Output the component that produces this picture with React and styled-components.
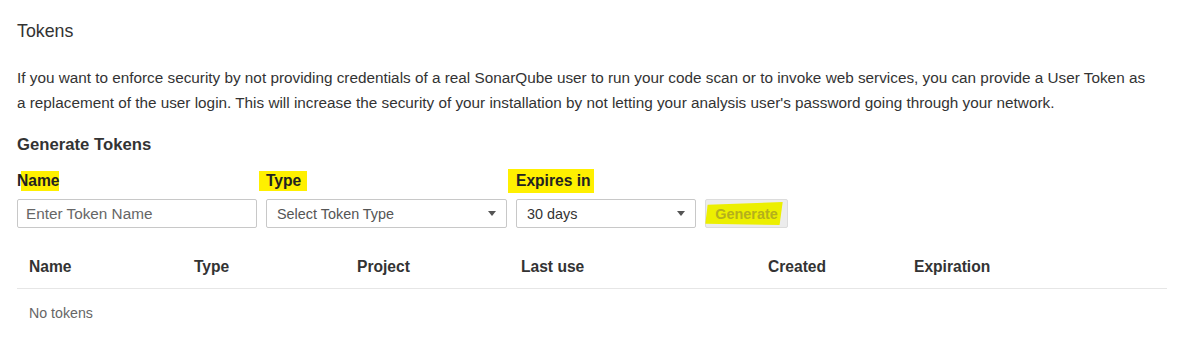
import styled, { createGlobalStyle } from 'styled-components';

const GlobalStyle = createGlobalStyle`
  body {
    margin: 0;
    background: #fff;
    font-family: 'Liberation Sans', Arial, sans-serif;
    color: #333;
  }
`;

const columns = [
  { label: 'Name', width: 165 },
  { label: 'Type', width: 163 },
  { label: 'Project', width: 164 },
  { label: 'Last use', width: 247 },
  { label: 'Created', width: 146 },
  { label: 'Expiration', width: null },
];

const Arrow = () => (
  <svg width='8' height='5' viewBox='0 0 8 5'>
    <path d='M0 0 L8 0 L4 5 Z' fill='#555' />
  </svg>
);

const App = () => (
  <>
    <GlobalStyle />
    <Page>
      <Title>Tokens</Title>
      <Description>
        If you want to enforce security by not providing credentials of a real
        SonarQube user to run your code scan or to invoke web services, you can
        provide a User Token as a replacement of the user login. This will
        increase the security of your installation by not letting your analysis
        user's password going through your network.
      </Description>

      <SubTitle>Generate Tokens</SubTitle>
      <Form>
        <Field width={240}>
          <Label>
            <Mark kind='name'>Name</Mark>
          </Label>
          <Input placeholder='Enter Token Name' />
        </Field>
        <Field width={241}>
          <Label>
            <Mark kind='type'>Type</Mark>
          </Label>
          <Select>
            <SelectText muted>Select Token Type</SelectText>
            <Arrow />
          </Select>
        </Field>
        <Field width={180}>
          <Label>
            <Mark kind='expires'>Expires in</Mark>
          </Label>
          <Select>
            <SelectText>30 days</SelectText>
            <Arrow />
          </Select>
        </Field>
        <GenerateButton disabled>
          <ButtonMark>Generate</ButtonMark>
        </GenerateButton>
      </Form>

      <Table>
        <HeadRow>
          {columns.map((c) => (
            <HeadCell key={c.label} width={c.width}>
              {c.label}
            </HeadCell>
          ))}
        </HeadRow>
        <EmptyRow>No tokens</EmptyRow>
      </Table>
    </Page>
  </>
);

const markPadding = {
  name: '1px 0 1px 0',
  type: '1px 6px 1px 7px',
  expires: '3px 3px 3px 8px',
};

const markShift = {
  name: '0',
  type: '-7px',
  expires: '-8px',
};

const Page = styled.div`
  padding: 20px 13px 0 17px;
  width: 1150px;
`;

const Title = styled.h2`
  margin: 0;
  font-size: 17.8px;
  font-weight: 400;
  line-height: 22px;
  color: #333;
`;

const Description = styled.p`
  margin: 23px 0 0;
  max-width: 1136px;
  font-size: 15.3px;
  line-height: 25px;
  color: #333;
`;

const SubTitle = styled.h3`
  margin: 19px 0 0;
  font-size: 16.7px;
  font-weight: 700;
  line-height: 22px;
  color: #333;
`;

const Form = styled.div`
  display: flex;
  align-items: flex-end;
  gap: 9px;
  margin-top: 7px;
`;

const Field = styled.div`
  display: flex;
  flex-direction: column;
  width: ${(p) => p.width}px;
`;

const Label = styled.div`
  height: 36px;
  display: flex;
  align-items: flex-start;
  padding-top: 8px;
  box-sizing: border-box;
  font-size: 15.6px;
  font-weight: 700;
  color: #222;
`;

const Mark = styled.span`
  line-height: 18px;
  padding: ${(p) => markPadding[p.kind]};
  margin-left: ${(p) => markShift[p.kind]};
  margin-top: ${(p) => (p.kind === 'expires' ? '-2px' : '0')};
  background: ${(p) =>
    p.kind === 'name'
      ? 'linear-gradient(90deg, transparent 0, transparent 4px, #fff000 4px)'
      : '#fff000'};
`;

const Input = styled.input`
  box-sizing: border-box;
  height: 29px;
  width: 100%;
  border: 1px solid #c8c8c8;
  border-radius: 2px;
  padding: 0 8px;
  font-family: 'Liberation Sans', Arial, sans-serif;
  font-size: 15.3px;
  outline: none;
  &::placeholder {
    color: #666;
  }
`;

const Select = styled.div`
  box-sizing: border-box;
  height: 29px;
  display: flex;
  align-items: center;
  justify-content: space-between;
  border: 1px solid #c8c8c8;
  border-radius: 2px;
  padding: 0 10px 0 10px;
`;

const SelectText = styled.span`
  font-size: 14.4px;
  color: ${(p) => (p.muted ? '#555' : '#333')};
`;

const GenerateButton = styled.button`
  box-sizing: border-box;
  height: 29px;
  width: 83px;
  padding: 0;
  border: 1px solid #dcdcdc;
  border-radius: 2px;
  background: #ececec;
  display: flex;
  align-items: center;
  justify-content: center;
  font-family: 'Liberation Sans', Arial, sans-serif;
  font-size: 14.4px;
  font-weight: 700;
  color: #b4b01c;
`;

const ButtonMark = styled.span`
  display: inline-block;
  padding: 4px 5px 3px 10px;
  margin-left: -5px;
  background: #ecef00;
  clip-path: polygon(3% 12%, 100% 0, 96% 100%, 0 95%);
`;

const Table = styled.div`
  margin-top: 18px;
`;

const HeadRow = styled.div`
  display: flex;
  height: 42px;
  align-items: center;
  border-bottom: 1px solid #e6e6e6;
`;

const HeadCell = styled.div`
  padding-left: 12px;
  box-sizing: border-box;
  ${(p) => (p.width ? `width: ${p.width}px;` : 'flex: 1;')}
  font-size: 15.6px;
  font-weight: 700;
  color: #333;
`;

const EmptyRow = styled.div`
  padding: 0 12px;
  height: 48px;
  display: flex;
  align-items: center;
  font-size: 14.2px;
  color: #666;
`;

export default App;
